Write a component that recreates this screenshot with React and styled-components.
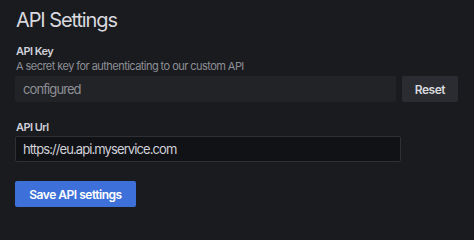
import React from "react"
import styled, { createGlobalStyle } from "styled-components"

const GlobalStyle = createGlobalStyle`
  html, body {
    margin: 0;
    padding: 0;
    background: #1a1b1f;
  }
  body {
    font-family: Inter, "Noto Sans", sans-serif;
    color: #ccccdc;
  }
`

const Page = styled.div`
  padding: 8px 16px 0 15px;
  width: 474px;
  height: 219px;
  box-sizing: border-box;
  overflow: hidden;
`

const Title = styled.h1`
  margin: 0 0 12px 1px;
  font-size: 20px;
  font-weight: 400;
  line-height: 24px;
  letter-spacing: -0.055em;
  color: #d8d9de;
`

const Field = styled.div`
  margin-bottom: ${(p) => p.$gap || 18}px;
`

const Label = styled.div`
  font-size: 11px;
  font-weight: 600;
  line-height: 15px;
  letter-spacing: -0.05em;
  color: #d0d1d9;
  margin-left: 1px;
`

const Description = styled.div`
  font-size: 11px;
  line-height: 15px;
  letter-spacing: -0.05em;
  color: #8e8f96;
  margin-left: 1px;
`

const Row = styled.div`
  display: flex;
  gap: 6px;
  margin-top: ${(p) => p.$top || 2}px;
`

const Input = styled.div`
  width: 386px;
  height: 26px;
  box-sizing: border-box;
  display: flex;
  align-items: center;
  padding: 0 7px;
  border-radius: 2px;
  font-size: 13px;
  letter-spacing: -0.07em;
  background: ${(p) => (p.$disabled ? "#222327" : "#111215")};
  border: 1px solid ${(p) => (p.$disabled ? "#222327" : "#2e3035")};
  color: ${(p) => (p.$disabled ? "#8e8f96" : "#d0d1d9")};
`

const Button = styled.button`
  height: 26px;
  width: ${(p) => p.$width}px;
  padding: 0;
  border: none;
  border-radius: 2px;
  font-family: Inter, "Noto Sans", sans-serif;
  font-size: 12px;
  font-weight: 600;
  letter-spacing: -0.04em;
  cursor: pointer;
  background: ${(p) => (p.$primary ? "#3d71d9" : "#2b2c31")};
  color: ${(p) => (p.$primary ? "#ffffff" : "#d8d9de")};
`

export default function App() {
  return (
    <>
      <GlobalStyle />
      <Page>
        <Title>API Settings</Title>
        <Field>
          <Label>API Key</Label>
          <Description>A secret key for authenticating to our custom API</Description>
          <Row>
            <Input $disabled>configured</Input>
            <Button $width={57}>Reset</Button>
          </Row>
        </Field>
        <Field $gap={19}>
          <Label>API Url</Label>
          <Row $top={1}>
            <Input>https://eu.api.myservice.com</Input>
          </Row>
        </Field>
        <Button $primary $width={121}>Save API settings</Button>
      </Page>
    </>
  )
}
